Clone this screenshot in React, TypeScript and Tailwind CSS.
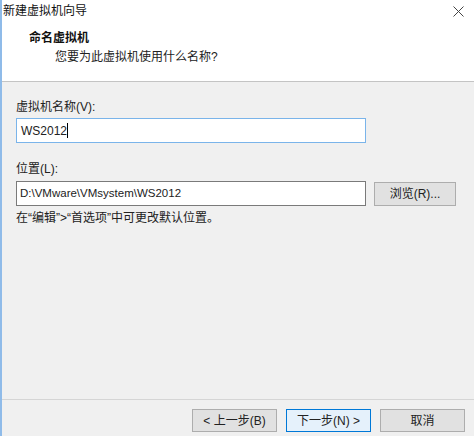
import React from "react";

const font = { fontFamily: '"Liberation Sans", "Noto Sans CJK SC", sans-serif' };

function WinButton({ label, primary }: { label: string; primary?: boolean }) {
  return (
    <button
      className={`h-[23px] w-[85px] text-[12px] leading-none text-[#222] ${
        primary ? "border border-[#0078d7] bg-[#e5f1fb]" : "border border-[#adadad] bg-[#e1e1e1]"
      }`}
    >
      {label}
    </button>
  );
}

export default function App() {
  return (
    <div className="w-[474px] h-[436px] flex flex-col bg-[#f0f0f0] border-l-2 border-[#8fbbe9] overflow-hidden" style={font}>
      {/* header */}
      <div className="h-[82px] bg-white border-b border-[#c4c4c4] flex flex-col">
        <div className="flex items-center justify-between h-[22px] pl-[1px] pr-[10px]">
          <span className="text-[12px] text-[#111]">新建虚拟机向导</span>
          <svg width="11" height="11" viewBox="0 0 11 11" className="text-[#444]">
            <path d="M0.5 0.5 L10.5 10.5 M10.5 0.5 L0.5 10.5" stroke="currentColor" strokeWidth="1" />
          </svg>
        </div>
        <div className="pl-[27px] mt-[8px] text-[12px] font-bold text-[#111] leading-4">命名虚拟机</div>
        <div className="pl-[53px] mt-[3px] text-[12px] text-[#222] leading-4">您要为此虚拟机使用什么名称?</div>
      </div>

      {/* body */}
      <div className="flex-1 pl-[14px] pr-[17px] pt-[17px] text-[12px] text-[#222]">
        <div className="leading-4">虚拟机名称(V):</div>
        <div className="mt-[3px] w-[350px] h-[25px] bg-white border border-[#7ab4ea] flex items-center px-[4px]">
          <span className="text-[12px]">WS2012</span>
          <span className="w-px h-[15px] bg-black" />
        </div>
        <div className="mt-[18px] leading-4">位置(L):</div>
        <div className="mt-[4px] flex items-center gap-[8px]">
          <div className="w-[350px] h-[25px] bg-white border border-[#7a7a7a] flex items-center px-[3px]">
            <span className="text-[11.5px]">D:\VMware\VMsystem\WS2012</span>
          </div>
          <button className="w-[82px] h-[24px] border border-[#adadad] bg-[#e1e1e1] text-[12px] text-[#222]">
            浏览(R)...
          </button>
        </div>
        <div className="mt-[4px] leading-4">在“编辑”&gt;“首选项”中可更改默认位置。</div>
      </div>

      {/* footer */}
      <div className="h-[37px] border-t border-[#d5d5d5] flex justify-end items-start pt-[9px] pr-[9px] gap-[9px]">
        <WinButton label="< 上一步(B)" />
        <WinButton label="下一步(N) >" primary />
        <WinButton label="取消" />
      </div>
    </div>
  );
}
